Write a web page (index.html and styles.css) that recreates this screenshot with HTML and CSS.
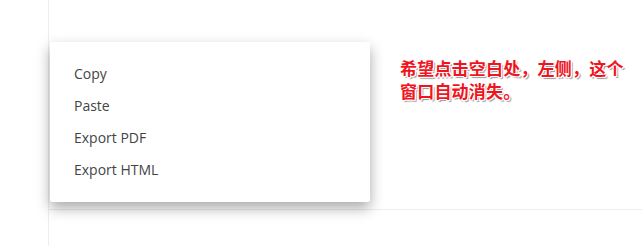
FILE: index.html
```html
<!DOCTYPE html>
<html lang="zh-CN">
<head>
<meta charset="utf-8">
<title>Context menu</title>
<link rel="stylesheet" href="styles.css">
</head>
<body>
<div class="app">
  <aside class="sidebar"></aside>
  <main class="main">
    <section class="canvas">
      <ul class="menu">
        <li class="menu-item">Copy</li>
        <li class="menu-item">Paste</li>
        <li class="menu-item">Export PDF</li>
        <li class="menu-item">Export HTML</li>
      </ul>
      <p class="note">希望点击空白处，左侧，这个<br>窗口自动消失。</p>
    </section>
  </main>
</div>
</body>
</html>
```

FILE: styles.css
```css
html, body {
  margin: 0;
  padding: 0;
  background: #ffffff;
}
body {
  width: 642px;
  height: 246px;
  overflow: hidden;
  font-family: "Open Sans", "Noto Sans", sans-serif;
}
.app {
  display: flex;
  height: 246px;
}
.sidebar {
  width: 48px;
  flex: none;
  border-right: 1px solid #eeeeee;
}
.main {
  flex: 1;
}
.canvas {
  position: relative;
  height: 209px;
  border-bottom: 1px solid #eeeeee;
}
.menu {
  position: absolute;
  left: 1px;
  top: 42px;
  width: 320px;
  height: 160px;
  box-sizing: border-box;
  margin: 0;
  padding: 16px 0;
  list-style: none;
  background: #ffffff;
  border-radius: 2px;
  box-shadow: 0 6px 14px rgba(0, 0, 0, 0.34);
}
.menu-item {
  height: 32px;
  line-height: 32px;
  padding-left: 24px;
  font-size: 14px;
  color: #444444;
}
.note {
  position: absolute;
  left: 351px;
  top: 56px;
  margin: 0;
  font-family: "Noto Sans CJK SC", sans-serif;
  font-weight: 700;
  font-size: 17px;
  letter-spacing: 0.2px;
  line-height: 23px;
  color: #f0141e;
  text-shadow: 1px 1px 0 #ffffff, -1px -1px 0 #ffffff, 1px -1px 0 #ffffff, -1px 1px 0 #ffffff, 2px 2px 1px #999999;
}
```
